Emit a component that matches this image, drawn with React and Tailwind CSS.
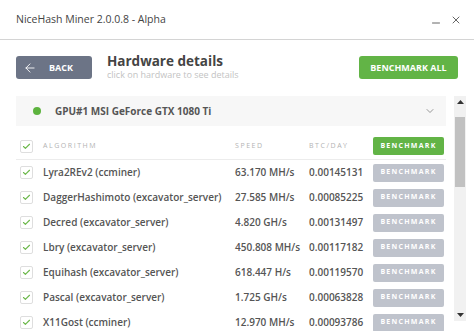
import { ArrowLeft, ChevronDown, Check, Minus, X } from 'lucide-react';

const rows = [
  { name: 'Lyra2REv2 (ccminer)', speed: '63.170 MH/s', btc: '0.00145131' },
  { name: 'DaggerHashimoto (excavator_server)', speed: '27.585 MH/s', btc: '0.00085225' },
  { name: 'Decred (excavator_server)', speed: '4.820 GH/s', btc: '0.00131497' },
  { name: 'Lbry (excavator_server)', speed: '450.808 MH/s', btc: '0.00117182' },
  { name: 'Equihash (excavator_server)', speed: '618.447 H/s', btc: '0.00119570' },
  { name: 'Pascal (excavator_server)', speed: '1.725 GH/s', btc: '0.00063828' },
  { name: 'X11Gost (ccminer)', speed: '12.970 MH/s', btc: '0.00093786' },
];

function CheckBox() {
  return (
    <div className="flex h-[13px] w-[13px] shrink-0 items-center justify-center rounded-[2px] border border-[#dedede] bg-white">
      <Check size={9} strokeWidth={3} className="text-[#6cb84a]" />
    </div>
  );
}

function BenchButton({ active }) {
  return (
    <button
      className={`flex h-[18px] w-[71px] items-center justify-center rounded-[2px] text-[7px] font-bold tracking-[0.18em] text-white ${
        active ? 'bg-[#62b446]' : 'bg-[#bfc3cc]'
      }`}
    >
      BENCHMARK
    </button>
  );
}

export default function App() {
  return (
    <div className="h-[331px] w-[474px] overflow-hidden bg-white font-['Open_Sans',sans-serif] text-[#555]">
      <div className="flex h-[40px] items-center justify-between border-b border-[#d4d4d4] pl-4 pr-[12px]">
        <span className="text-[10.5px] text-[#444]">NiceHash Miner 2.0.0.8 - Alpha</span>
        <div className="flex items-center gap-[8px] text-[#333]">
          <Minus size={12} strokeWidth={1.5} className="mt-[6px]" />
          <X size={12} strokeWidth={1.5} />
        </div>
      </div>

      <div className="flex items-start pl-4 pr-4 pt-[16px]">
        <button className="flex h-[23px] w-[76px] items-center rounded-[3px] bg-[#6c7486] pl-[7px] text-white">
          <ArrowLeft size={14} strokeWidth={1.5} />
          <span className="ml-[12px] text-[9px] font-bold">BACK</span>
        </button>
        <div className="-mt-[3px] ml-[15px] flex flex-col">
          <span className="text-[13.5px] font-bold leading-[17px] text-[#444]">Hardware details</span>
          <span className="text-[9px] leading-[10px] text-[#c3c3c3]">click on hardware to see details</span>
        </div>
        <button className="ml-auto flex h-[23px] w-[99px] items-center justify-center rounded-[3px] bg-[#62b446] text-[9px] font-bold text-white">
          BENCHMARK ALL
        </button>
      </div>

      <div className="mt-[16px] flex pl-4">
        <div className="w-[430px]">
          <div className="flex h-[30px] items-center bg-[#f7f7f7] pl-[17px] pr-[10px]">
            <div className="h-[8px] w-[8px] rounded-full bg-[#5db33e]" />
            <span className="ml-[14px] text-[10px] font-bold text-[#555]">GPU#1 MSI GeForce GTX 1080 Ti</span>
            <ChevronDown size={12} strokeWidth={1.5} className="ml-auto text-[#777]" />
          </div>

          <div className="mt-[10px] flex h-[20px] items-center pl-[4px]">
            <CheckBox />
            <span className="ml-[10px] w-[192px] text-[7px] tracking-[0.22em] text-[#b3b3b3]">ALGORITHM</span>
            <span className="w-[74px] text-[7px] tracking-[0.22em] text-[#b3b3b3]">SPEED</span>
            <span className="w-[64px] text-[7px] tracking-[0.22em] text-[#b3b3b3]">BTC/DAY</span>
            <BenchButton active />
          </div>
          <div className="mt-[3px] border-b border-[#ececec]" />

          {rows.map((r) => (
            <div key={r.name} className="flex h-[25px] items-center pl-[4px]">
              <CheckBox />
              <span className="ml-[10px] w-[192px] text-[10px] font-semibold text-[#555]">{r.name}</span>
              <span className="w-[74px] text-[10px] font-semibold text-[#555]">{r.speed}</span>
              <span className="w-[64px] text-[10px] font-semibold text-[#555]">{r.btc}</span>
              <BenchButton />
            </div>
          ))}
        </div>

        <div className="ml-[8px] flex h-[225px] w-[12px] flex-col items-center bg-[#f1f1f1] pt-[4px]">
          <svg width="7" height="4" viewBox="0 0 7 4" className="fill-[#333]">
            <path d="M3.5 0 L7 4 L0 4 Z" />
          </svg>
          <div className="mt-[13px] h-[70px] w-[10px] bg-[#c1c1c1]" />
          <svg width="7" height="4" viewBox="0 0 7 4" className="mt-auto mb-[4px] fill-[#333]">
            <path d="M0 0 L7 0 L3.5 4 Z" />
          </svg>
        </div>
      </div>
    </div>
  );
}
